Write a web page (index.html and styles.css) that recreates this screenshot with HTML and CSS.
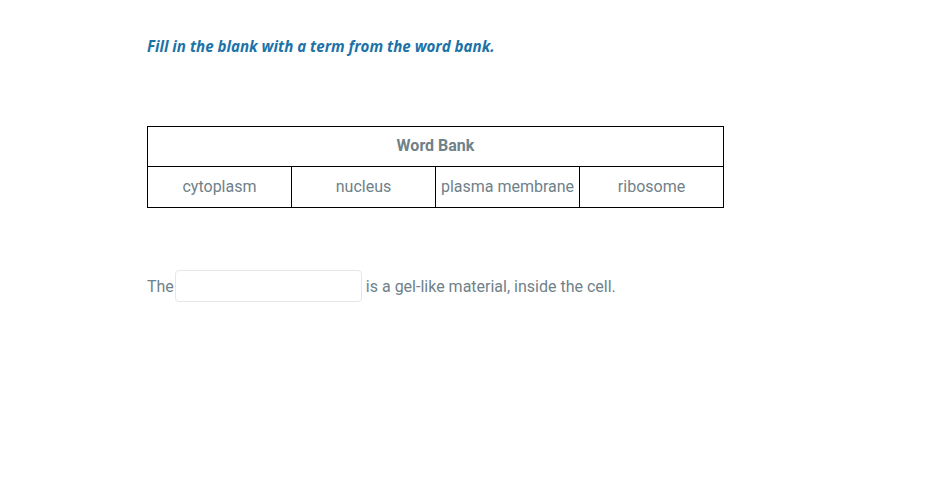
FILE: index.html
```html
<!DOCTYPE html>
<html>
<head>
<meta charset="utf-8">
<link rel="stylesheet" href="styles.css">
</head>
<body>
<div class="page">
  <p class="prompt">Fill in the blank with a term from the word bank.</p>
  <table class="bank">
    <thead>
      <tr><th colspan="4">Word Bank</th></tr>
    </thead>
    <tbody>
      <tr>
        <td>cytoplasm</td>
        <td>nucleus</td>
        <td>plasma membrane</td>
        <td>ribosome</td>
      </tr>
    </tbody>
  </table>
  <p class="sentence">The <input class="blank" type="text"> is a gel-like material, inside the cell.</p>
</div>
</body>
</html>
```
FILE: styles.css
```css
html, body {
  margin: 0;
  background: #ffffff;
}
body {
  font-family: Roboto, "Noto Sans", sans-serif;
  color: #6f8189;
  font-size: 16px;
}
.page {
  padding: 35px 0 0 147px;
}
.prompt {
  margin: 0;
  font-family: "Open Sans", Roboto, sans-serif;
  font-weight: 700;
  font-style: italic;
  color: #1b72a8;
  font-size: 15.1px;
  line-height: 22px;
}
.bank {
  margin-top: 69px;
  border-collapse: collapse;
  width: 577px;
  table-layout: fixed;
}
.bank th, .bank td {
  border: 1px solid #000;
  text-align: center;
  padding: 0;
}
.bank th {
  height: 37px;
  padding-bottom: 2px;
  font-weight: 700;
  color: #6f8189;
}
.bank td {
  height: 39px;
  padding-bottom: 1px;
  font-weight: 400;
}
.sentence {
  margin: 62px 0 0;
  display: flex;
  align-items: center;
  gap: 1px;
}
.blank {
  width: 187px;
  height: 32px;
  box-sizing: border-box;
  border: 1px solid #e4e6e8;
  border-radius: 4px;
  margin: 0 3px 0 0;
  padding: 0;
}
```
